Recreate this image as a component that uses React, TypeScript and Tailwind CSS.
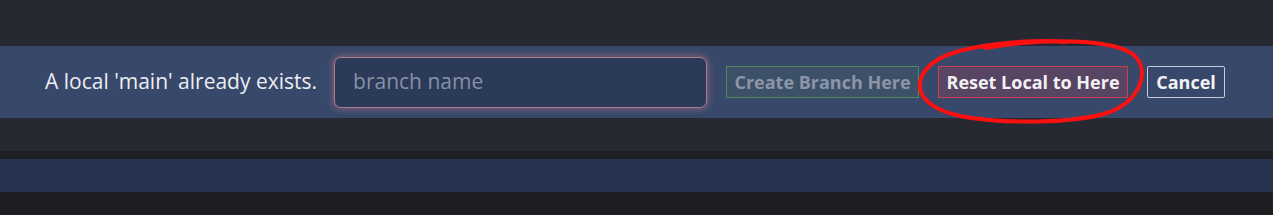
import React from "react";

export default function App() {
  return (
    <div
      className="relative w-[1273px] h-[215px] bg-[#262932] overflow-hidden"
      style={{ fontFamily: '"Open Sans", "Noto Sans", sans-serif' }}
    >
      <div className="h-[46px] bg-[#262932]" />
      <div className="h-[72px] bg-[#37486a] flex items-center pl-[45px]">
        <span className="text-[21px] text-[#eceef3] whitespace-nowrap">
          A local 'main' already exists.
        </span>
        <div className="ml-[17px] shrink-0 w-[373px] h-[51px] rounded-[7px] border border-[#b07a88] bg-[#2b3a58] shadow-[0_0_6px_2px_rgba(190,120,140,0.45)] flex items-center pl-[18px]">
          <span className="text-[21px] text-[#8791a8]">branch name</span>
        </div>
        <button className="ml-[19px] shrink-0 whitespace-nowrap h-[32px] w-[193px] border border-[#4d8a5c] bg-[#3c5068] text-[#8d95a9] font-bold text-[18px] leading-none">
          Create Branch Here
        </button>
        <button className="ml-[19px] shrink-0 whitespace-nowrap h-[32px] w-[190px] border border-[#cc3f46] bg-[#584463] text-[#f3f0f3] font-bold text-[18px] leading-none">
          Reset Local to Here
        </button>
        <button className="ml-[19px] shrink-0 whitespace-nowrap h-[32px] w-[78px] rounded-[2px] border border-[#c8ccd8] bg-[#37486a] text-[#f3f3f6] font-bold text-[18px] leading-none">
          Cancel
        </button>
      </div>
      <div className="h-[33px] bg-[#262932]" />
      <div className="h-[8px] bg-[#1f2025]" />
      <div className="h-[33px] bg-[#263350]" />
      <div className="h-[23px] bg-[#1e1f23]" />
      <svg
        className="absolute left-0 top-0 pointer-events-none"
        width="1273"
        height="215"
        viewBox="0 0 1273 215"
      >
        <path
          d="M 985 48 C 1040 38, 1115 38, 1135 56 C 1150 72, 1140 100, 1110 112 C 1075 124, 1000 124, 960 116 C 925 108, 915 92, 922 76 C 930 58, 955 50, 990 45 C 1020 41, 1045 40, 1065 42"
          fill="none"
          stroke="#ff1010"
          strokeWidth="4"
          strokeLinecap="round"
        />
      </svg>
    </div>
  );
}
